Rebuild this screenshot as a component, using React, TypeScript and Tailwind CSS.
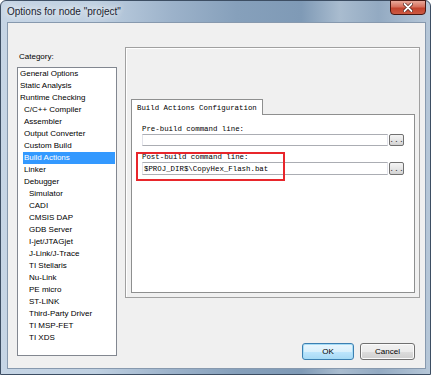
const categories: { label: string; level: number; selected?: boolean }[] = [
  { label: "General Options", level: 0 },
  { label: "Static Analysis", level: 0 },
  { label: "Runtime Checking", level: 0 },
  { label: "C/C++ Compiler", level: 1 },
  { label: "Assembler", level: 1 },
  { label: "Output Converter", level: 1 },
  { label: "Custom Build", level: 1 },
  { label: "Build Actions", level: 1, selected: true },
  { label: "Linker", level: 1 },
  { label: "Debugger", level: 1 },
  { label: "Simulator", level: 2 },
  { label: "CADI", level: 2 },
  { label: "CMSIS DAP", level: 2 },
  { label: "GDB Server", level: 2 },
  { label: "I-jet/JTAGjet", level: 2 },
  { label: "J-Link/J-Trace", level: 2 },
  { label: "TI Stellaris", level: 2 },
  { label: "Nu-Link", level: 2 },
  { label: "PE micro", level: 2 },
  { label: "ST-LINK", level: 2 },
  { label: "Third-Party Driver", level: 2 },
  { label: "TI MSP-FET", level: 2 },
  { label: "TI XDS", level: 2 },
];

const indent = ["ml-[1px]", "ml-[5px]", "ml-[10px]"];

const BrowseButton = ({ h }: { h: string }) => (
  <div
    className={`w-[15px] ${h} ml-[1px] rounded-[2px] border border-[#707070] bg-[linear-gradient(#f4f4f4,#e6e6e6_50%,#d2d2d2)] flex items-end justify-center text-[8px] leading-[8px] pb-[1px] text-[#333]`}
  >
    ...
  </div>
);

const App = () => {
  return (
    <div className="w-[431px] h-[375px] bg-white font-['Liberation_Sans',Arial,sans-serif] text-black">
      <div className="w-[431px] h-[375px] flex flex-col rounded-t-[6px] border border-[#3d4e63] bg-[linear-gradient(90deg,#c6d5e5_0%,#bfd0e1_22%,#9cb2ca_40%,#86a0bb_55%,#7f9ab6_70%,#a9bccf_79%,#93aac2_88%,#b6c7d8_100%)] pl-[6px] pr-[4px] pb-[5px]">
        {/* title bar */}
        <div className="h-[21px] flex items-start shrink-0">
          <div className="h-[21px] flex items-center text-[10px] text-[#1b2430] [text-shadow:0_0_6px_#ffffff,0_0_10px_#ffffff]">
            Options for node "project"
          </div>
          <div className="ml-auto w-[36px] h-[15px] -mt-px rounded-b-[4px] border border-[#4a1812] bg-[linear-gradient(#e9a99a,#d7705d_45%,#c2432d_55%,#cc5a43)] flex items-center justify-center">
            <svg width="10" height="9" viewBox="0 0 10 9">
              <path d="M1.5 1 L8.5 8 M8.5 1 L1.5 8" stroke="#4b1a14" strokeWidth="3.2" strokeLinecap="round" />
              <path d="M1.5 1 L8.5 8 M8.5 1 L1.5 8" stroke="#ffffff" strokeWidth="1.8" strokeLinecap="round" />
            </svg>
          </div>
        </div>

        {/* client area */}
        <div className="flex-1 bg-[#f0f0f0] border border-[#8799ae] flex">
          {/* left column */}
          <div className="ml-[9px] w-[100px] flex flex-col">
            <div className="mt-[28px] h-[12px] leading-[12px] text-[8px] pl-[2px]">Category:</div>
            <div className="mt-[4px] h-[289px] border border-[#828790] bg-white">
              {categories.map((c) => (
                <div
                  key={c.label}
                  className={`h-[12px] leading-[12px] text-[8px] pl-[1px] whitespace-nowrap ${indent[c.level]} ${
                    c.selected ? "bg-[#3399ff] text-white mr-[1px]" : ""
                  }`}
                >
                  {c.label}
                </div>
              ))}
            </div>
          </div>

          {/* right column */}
          <div className="ml-[8px] w-[295px] flex flex-col">
            <div className="mt-[24px] h-[251px] border border-[#a0a0a0] bg-[#f0f0f0] flex flex-col pt-[51px] pl-[5px] pr-[4px] pb-[4px] shadow-[inset_1px_1px_0_#ffffff]">
              <div className="self-start h-[16px] -mb-px relative z-10 border-x border-t border-[#8e8f8f] bg-white px-[5px] flex items-center font-['Liberation_Mono','Courier_New',monospace] text-[7.4px] leading-[10px]">
                Build Actions Configuration
              </div>
              <div className="flex-1 relative border border-[#8e8f8f] bg-white pt-[9px] pl-[10px] pr-[10px] font-['Liberation_Mono','Courier_New',monospace] text-[7.4px]">
                <div className="h-[10px] leading-[10px]">Pre-build command line:</div>
                <div className="flex h-[12px]">
                  <div className="flex-1 border border-[#abadb3] border-l-[#e2e3ea] border-r-[#e2e3ea] bg-white" />
                  <BrowseButton h="h-[12px]" />
                </div>
                <div className="mt-[6px] h-[10px] leading-[10px]">Post-build command line:</div>
                <div className="flex h-[13px]">
                  <div className="flex-1 border border-[#abadb3] border-l-[#e2e3ea] border-r-[#e2e3ea] bg-white flex items-center pl-[1px] leading-[10px]">
                    $PROJ_DIR$\CopyHex_Flash.bat
                  </div>
                  <BrowseButton h="h-[13px]" />
                </div>
                {/* highlight annotation */}
                <div className="absolute left-[4px] top-[37px] w-[149px] h-[29px] border-2 border-[#e8262b]" />
              </div>
            </div>

            <div className="mt-[45px] flex justify-end gap-[6px] pr-[5px]">
              <div className="w-[52px] h-[17px] rounded-[3px] border border-[#3c7fb1] bg-[linear-gradient(#eaf6fd,#d9f0fc_50%,#bee6fd_51%,#a7d9f5)] shadow-[inset_0_0_0_1px_#a6dcf6] flex items-center justify-center text-[8px]">
                OK
              </div>
              <div className="w-[55px] h-[17px] rounded-[3px] border border-[#707070] bg-[linear-gradient(#f2f2f2,#ebebeb_50%,#dddddd_51%,#cfcfcf)] shadow-[inset_0_0_0_1px_#fbfbfb] flex items-center justify-center text-[8px]">
                Cancel
              </div>
            </div>
          </div>
        </div>
      </div>
    </div>
  );
};

export default App;
